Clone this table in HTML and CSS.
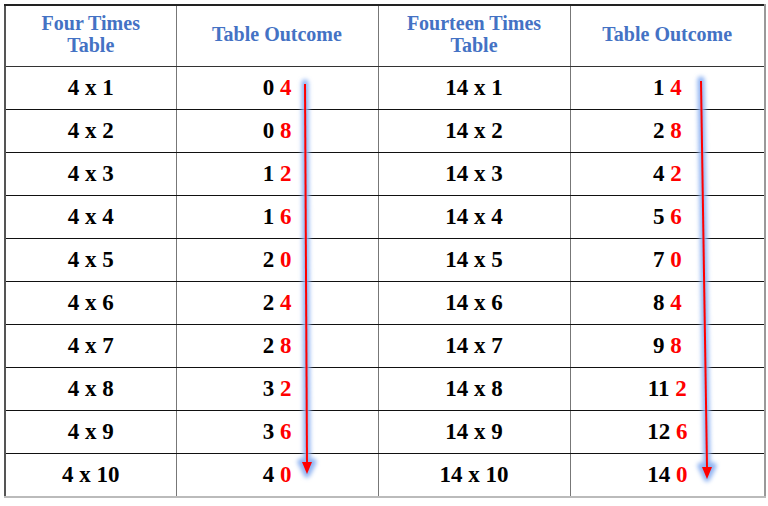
FILE: index.html
```html
<!DOCTYPE html>
<html>
<head>
<meta charset="utf-8">
<link rel="stylesheet" href="styles.css">
</head>
<body>
<div class="wrap">
<table class="tt">
<colgroup><col class="c1"><col class="c2"><col class="c3"><col class="c4"></colgroup>
<thead>
<tr><th>Four Times<br>Table</th><th>Table Outcome</th><th>Fourteen Times<br>Table</th><th>Table Outcome</th></tr>
</thead>
<tbody>
<tr><td>4 x 1</td><td class="o">0 <span class="r">4</span></td><td>14 x 1</td><td class="o">1 <span class="r">4</span></td></tr>
<tr><td>4 x 2</td><td class="o">0 <span class="r">8</span></td><td>14 x 2</td><td class="o">2 <span class="r">8</span></td></tr>
<tr><td>4 x 3</td><td class="o">1 <span class="r">2</span></td><td>14 x 3</td><td class="o">4 <span class="r">2</span></td></tr>
<tr><td>4 x 4</td><td class="o">1 <span class="r">6</span></td><td>14 x 4</td><td class="o">5 <span class="r">6</span></td></tr>
<tr><td>4 x 5</td><td class="o">2 <span class="r">0</span></td><td>14 x 5</td><td class="o">7 <span class="r">0</span></td></tr>
<tr><td>4 x 6</td><td class="o">2 <span class="r">4</span></td><td>14 x 6</td><td class="o">8 <span class="r">4</span></td></tr>
<tr><td>4 x 7</td><td class="o">2 <span class="r">8</span></td><td>14 x 7</td><td class="o">9 <span class="r">8</span></td></tr>
<tr><td>4 x 8</td><td class="o">3 <span class="r">2</span></td><td>14 x 8</td><td class="o">11 <span class="r">2</span></td></tr>
<tr><td>4 x 9</td><td class="o">3 <span class="r">6</span></td><td>14 x 9</td><td class="o">12 <span class="r">6</span></td></tr>
<tr><td>4 x 10</td><td class="o">4 <span class="r">0</span></td><td>14 x 10</td><td class="o">14 <span class="r">0</span></td></tr>
</tbody>
</table>
<svg class="arrows" width="768" height="506" viewBox="0 0 768 506">
<defs>
<filter id="glow" x="-50%" y="-10%" width="200%" height="120%"><feGaussianBlur stdDeviation="2.2"/></filter>
</defs>
<g filter="url(#glow)" stroke="#8fb3f2" fill="#8fb3f2" stroke-width="7" stroke-linecap="round" stroke-linejoin="round">
<line x1="305" y1="83" x2="307" y2="462"/>
<polygon points="301,462 313,462 307,474"/>
<line x1="701" y1="80" x2="707" y2="466"/>
<polygon points="701,466 713,466 707,478"/>
</g>
<g stroke="#ff0000" fill="#ff0000" stroke-width="2">
<line x1="305" y1="84" x2="307" y2="463"/>
<polygon points="302,462 312,462 307,474" stroke="none"/>
<line x1="701" y1="81" x2="707" y2="467"/>
<polygon points="702,467 712,467 707,479" stroke="none"/>
</g>
</svg>
</div>
</body>
</html>
```
FILE: styles.css
```css
html, body {
  margin: 0;
  padding: 0;
  background: #ffffff;
}
.wrap {
  position: relative;
  width: 768px;
  height: 506px;
  padding: 4px 0 0 4px;
  box-sizing: border-box;
}
.tt {
  border-collapse: collapse;
  table-layout: fixed;
  width: 760px;
  font-family: "Liberation Serif", "Times New Roman", serif;
  font-weight: bold;
  border-top: 2px solid #222;
  border-left: 2px solid #555;
  border-right: 2px solid #999;
  border-bottom: 2px solid #bbb;
}
.c1 { width: 171px; }
.c2 { width: 202px; }
.c3 { width: 192px; }
.c4 { width: 195px; }
.tt th, .tt td {
  padding: 0;
  text-align: center;
  vertical-align: middle;
  border-left: 1px solid #777;
  border-right: 1px solid #777;
}
.tt th {
  height: 61px;
  padding-bottom: 3px;
  box-sizing: border-box;
  color: #4472c4;
  font-size: 20px;
  line-height: 22px;
  border-bottom: 1px solid #333;
}
.tt td {
  height: 42px;
  color: #000;
  font-size: 23px;
  line-height: 24px;
  border-bottom: 1px solid #111;
}
.tt tbody tr:last-child td {
  border-bottom: 2px solid #bbb;
}
.r { color: #ff0000; }
.arrows {
  position: absolute;
  left: 0;
  top: 0;
  pointer-events: none;
}
```
